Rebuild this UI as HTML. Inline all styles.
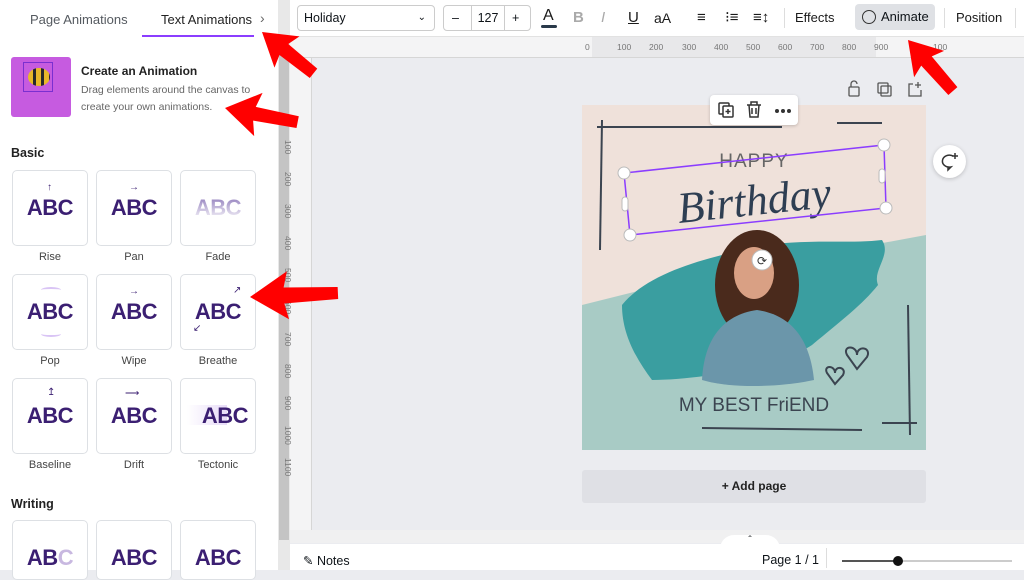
<!DOCTYPE html>
<html><head><meta charset="utf-8"><style>
*{margin:0;padding:0;box-sizing:border-box}
body{width:1024px;height:570px;overflow:hidden;background:#ebecf0;font-family:"Liberation Sans",sans-serif;position:relative;color:#0e1318}
.a{position:absolute}
.tab{font-size:13px;color:#555a60;top:12px}
.card{position:absolute;width:76px;height:76px;border:1px solid #dde0e4;border-radius:5px;background:#fff}
.abc{position:absolute;left:0;right:0;text-align:center;top:24px;font-weight:bold;font-size:22px;color:#3b1f72;letter-spacing:-0.5px}
.lbl{position:absolute;width:76px;text-align:center;font-size:11px;color:#444}
.h{position:absolute;left:11px;font-size:12.5px;font-weight:bold;color:#222}
.tb{position:absolute;top:0;height:36px;font-size:13px;line-height:36px;color:#1a1a1a}
.rn{position:absolute;font-size:8.5px;color:#777;top:42px}
.vn{position:absolute;left:293px;font-size:8.5px;color:#777;transform:rotate(90deg);transform-origin:left top}
</style></head><body>
<!-- left panel -->
<div class="a" style="left:0;top:0;width:278px;height:570px;background:#fff"></div>
<div class="a" style="left:278px;top:0;width:12px;height:570px;background:#e8e8e8"></div>
<div class="a" style="left:279px;top:40px;width:10px;height:500px;background:#c4c4c4"></div>
<div class="a tab" style="left:30px">Page Animations</div>
<div class="a tab" style="left:161px;color:#222">Text Animations</div>
<div class="a" style="left:260px;top:10px;font-size:14px;color:#666">›</div>
<div class="a" style="left:142px;top:35px;width:112px;height:2px;background:#8b3dff"></div>
<div class="a" style="left:11px;top:57px;width:60px;height:60px;background:#c65be0;border-radius:3px">
<div class="a" style="left:12px;top:5px;width:30px;height:30px;border:1px solid #7a2fd0"></div>
<div class="a" style="left:17px;top:11px;width:22px;height:18px;border-radius:50%;background:repeating-linear-gradient(90deg,#e8b82a 0 5px,#2a2a2a 5px 8px)"></div>
</div>
<div class="a" style="left:81px;top:64px;font-size:12px;font-weight:bold;color:#222">Create an Animation</div>
<div class="a" style="left:81px;top:82px;font-size:10.5px;color:#666;line-height:17px">Drag elements around the canvas to<br>create your own animations.</div>
<div class="h" style="top:146px">Basic</div>
<div class="card" style="left:12px;top:170px"><div class="a" style="left:34px;top:11px;font-size:10px;color:#3b1f72">↑</div><div class="abc">ABC</div></div>
<div class="card" style="left:96px;top:170px"><div class="a" style="left:32px;top:11px;font-size:10px;color:#3b1f72">→</div><div class="abc">ABC</div></div>
<div class="card" style="left:180px;top:170px"><div class="abc" style="background:linear-gradient(#8a75b8,#fff);-webkit-background-clip:text;color:transparent">ABC</div></div>
<div class="lbl" style="left:12px;top:251px">Rise</div><div class="lbl" style="left:96px;top:251px">Pan</div><div class="lbl" style="left:180px;top:251px">Fade</div>
<div class="card" style="left:12px;top:274px"><div class="a" style="left:28px;top:12px;width:20px;height:6px;border-top:2px solid #d9c4f5;border-radius:50%"></div><div class="abc">ABC</div><div class="a" style="left:28px;top:56px;width:20px;height:6px;border-bottom:2px solid #d9c4f5;border-radius:50%"></div></div>
<div class="card" style="left:96px;top:274px"><div class="a" style="left:32px;top:11px;font-size:10px;color:#3b1f72">→</div><div class="abc">ABC</div></div>
<div class="card" style="left:180px;top:274px"><div class="a" style="left:52px;top:10px;font-size:10px;color:#3b1f72">↗</div><div class="abc">ABC</div><div class="a" style="left:12px;top:48px;font-size:10px;color:#3b1f72">↙</div></div>
<div class="lbl" style="left:12px;top:355px">Pop</div><div class="lbl" style="left:96px;top:355px">Wipe</div><div class="lbl" style="left:180px;top:355px">Breathe</div>
<div class="card" style="left:12px;top:378px;overflow:hidden"><div class="a" style="left:34px;top:8px;font-size:10px;color:#3b1f72">↥</div><div class="abc" style="height:24px;overflow:hidden">ABC</div></div>
<div class="card" style="left:96px;top:378px"><div class="a" style="left:28px;top:9px;font-size:10px;color:#3b1f72">⟶</div><div class="abc">ABC</div></div>
<div class="card" style="left:180px;top:378px"><div class="a" style="left:6px;top:26px;width:40px;height:20px;background:linear-gradient(90deg,#fff,#e8dcf8)"></div><div class="abc" style="left:14px">ABC</div></div>
<div class="lbl" style="left:12px;top:459px">Baseline</div><div class="lbl" style="left:96px;top:459px">Drift</div><div class="lbl" style="left:180px;top:459px">Tectonic</div>
<div class="h" style="top:497px">Writing</div>
<div class="card" style="left:12px;top:520px;height:60px"><div class="abc">AB<span style="color:#c8b8e0">C</span></div></div>
<div class="card" style="left:96px;top:520px;height:60px"><div class="abc">ABC</div></div>
<div class="card" style="left:180px;top:520px;height:60px"><div class="abc">ABC</div></div>

<!-- toolbar -->
<div class="a" style="left:290px;top:0;width:734px;height:37px;background:#fff;border-bottom:1px solid #e2e2e2"></div>
<div class="a" style="left:297px;top:5px;width:138px;height:26px;border:1px solid #ccc;border-radius:4px;font-size:12.5px;line-height:24px;padding-left:6px">Holiday<span style="position:absolute;right:8px;font-size:10px">⌄</span></div>
<div class="a" style="left:443px;top:5px;width:88px;height:26px;border:1px solid #ccc;border-radius:4px;font-size:12.5px;line-height:24px">
<span class="a" style="left:8px">–</span><span class="a" style="left:27px;top:0;height:24px;border-left:1px solid #ccc;border-right:1px solid #ccc;width:34px;text-align:center">127</span><span class="a" style="left:68px">+</span></div>
<div class="tb" style="left:543px;font-size:16px;line-height:32px">A</div><div class="a" style="left:541px;top:25px;width:16px;height:3px;background:#2a3a4a;border-radius:2px"></div>
<div class="tb" style="left:573px;font-weight:bold;color:#aaa;font-size:15px">B</div>
<div class="tb" style="left:601px;font-style:italic;color:#aaa;font-size:15px">I</div>
<div class="tb" style="left:628px;text-decoration:underline;font-size:15px">U</div>
<div class="tb" style="left:654px;font-size:14px">aA</div>
<div class="tb" style="left:697px;font-size:15px">≡</div>
<div class="tb" style="left:725px;font-size:15px">⁝≡</div>
<div class="tb" style="left:753px;font-size:15px">≡↕</div>
<div class="a" style="left:784px;top:8px;width:1px;height:20px;background:#ddd"></div>
<div class="tb" style="left:795px">Effects</div>
<div class="a" style="left:855px;top:4px;width:80px;height:26px;background:#dfe1e5;border-radius:4px;font-size:13px;line-height:26px;padding-left:26px">Animate</div>
<div class="a" style="left:862px;top:10px;width:14px;height:14px;border:1.5px solid #333;border-radius:50%"></div>
<div class="a" style="left:944px;top:8px;width:1px;height:20px;background:#ddd"></div>
<div class="tb" style="left:956px">Position</div>
<div class="a" style="left:1015px;top:8px;width:1px;height:20px;background:#ddd"></div>

<!-- rulers -->
<div class="a" style="left:290px;top:37px;width:734px;height:21px;background:#f4f4f5;border-bottom:1px solid #d6d6d6"></div>
<div class="a" style="left:582px;top:37px;width:344px;height:20px;background:linear-gradient(90deg,#f4f4f5 0 10px,#e8e8ea 10px 294px,#f4f4f5 294px)"></div>
<div class="a" style="left:290px;top:58px;width:22px;height:485px;background:#f4f4f5;border-right:1px solid #d6d6d6"></div>
<div class="rn" style="left:585px">0</div><div class="rn" style="left:617px">100</div><div class="rn" style="left:649px">200</div><div class="rn" style="left:682px">300</div><div class="rn" style="left:714px">400</div><div class="rn" style="left:746px">500</div><div class="rn" style="left:778px">600</div><div class="rn" style="left:810px">700</div><div class="rn" style="left:842px">800</div><div class="rn" style="left:874px">900</div><div class="rn" style="left:933px">100</div>
<div class="vn" style="top:140px">100</div><div class="vn" style="top:172px">200</div><div class="vn" style="top:204px">300</div><div class="vn" style="top:236px">400</div><div class="vn" style="top:268px">500</div><div class="vn" style="top:300px">600</div><div class="vn" style="top:332px">700</div><div class="vn" style="top:364px">800</div><div class="vn" style="top:396px">900</div><div class="vn" style="top:426px">1000</div><div class="vn" style="top:458px">1100</div>

<!-- page icons -->
<svg class="a" style="left:845px;top:80px" width="80" height="18" fill="none" stroke="#555" stroke-width="1.3">
<rect x="4" y="7" width="10" height="9" rx="1"/><path d="M6 7 V4 a3 3 0 0 1 6 0"/>
<rect x="33" y="3" width="10" height="10" rx="1"/><rect x="36" y="6" width="10" height="10" rx="1"/>
<path d="M68 4 H64 V16 H76 V10 M73 2 V8 M70 5 H76"/>
</svg>

<!-- design card -->
<svg class="a" style="left:582px;top:105px" width="344" height="345" viewBox="0 0 344 345">
<rect width="344" height="345" fill="#efe1da"/>
<path d="M0 200 L100 175 L344 130 L344 345 L0 345Z" fill="#a8cbc5"/>
<path d="M40 200 C60 175 100 160 140 150 C200 130 260 140 300 135 C310 150 290 165 296 180 C280 200 260 215 230 240 C200 260 120 275 70 275 C55 255 40 230 40 200Z" fill="#3a9ea0"/>
<ellipse cx="175" cy="180" rx="42" ry="55" fill="#4a2a1c"/>
<ellipse cx="172" cy="168" rx="20" ry="26" fill="#d9a084"/>
<path d="M120 275 C122 235 140 210 175 205 C210 210 228 235 232 275 C200 282 150 284 120 275Z" fill="#6b96aa"/>
<g stroke="#3b4450" stroke-width="2" fill="none">
<path d="M20 15 L18 145"/><path d="M15 22 L200 22"/><path d="M255 18 L300 18"/><path d="M326 200 L328 330"/><path d="M120 323 L280 325"/><path d="M300 318 L335 318"/>
<path d="M265 250 c-5-10 10-10 10 0 c0-10 15-8 10 2 l-10 12z"/><path d="M245 268 c-4-8 8-8 8 0 c0-8 12-6 8 2 l-8 9z"/>
</g>
<text x="172" y="62" text-anchor="middle" font-family="Liberation Sans" font-size="19" fill="#666" letter-spacing="1">HAPPY</text>
<text x="172" y="110" text-anchor="middle" font-family="Liberation Serif" font-style="italic" font-size="44" fill="#2e3e52" transform="rotate(-6 172 95)">Birthday</text>
<text x="172" y="306" text-anchor="middle" font-family="Liberation Sans" font-size="19" fill="#3b4450">MY BEST FriEND</text>
<polygon points="42,68 302,40 304,103 48,130" fill="none" stroke="#8b3dff" stroke-width="1.5"/>
<g fill="#fff" stroke="#bbb"><circle cx="42" cy="68" r="6"/><circle cx="302" cy="40" r="6"/><circle cx="304" cy="103" r="6"/><circle cx="48" cy="130" r="6"/><rect x="40" y="92" width="6" height="14" rx="3"/><rect x="297" y="64" width="6" height="14" rx="3"/><circle cx="180" cy="155" r="10"/></g>
<text x="180" y="160" text-anchor="middle" font-size="12" fill="#333">⟳</text>
</svg>
<div class="a" style="left:710px;top:95px;width:88px;height:30px;background:#fff;border-radius:4px;box-shadow:0 1px 3px rgba(0,0,0,.2)"></div>
<svg class="a" style="left:710px;top:95px" width="88" height="30" fill="none" stroke="#333" stroke-width="1.5">
<rect x="9" y="8" width="10" height="11" rx="1"/><rect x="13" y="11" width="10" height="11" rx="1" fill="#fff"/><path d="M18 14 v5 M15.5 16.5 h5"/>
<path d="M37 10 h14 M41 10 V7 h6 v3 M39 10 l1 12 h8 l1-12 M42 13 v6 M46 13 v6"/>
<g fill="#333" stroke="none"><circle cx="67" cy="16" r="2"/><circle cx="73" cy="16" r="2"/><circle cx="79" cy="16" r="2"/></g>
</svg>
<div class="a" style="left:933px;top:145px;width:33px;height:33px;border-radius:50%;background:#fff;box-shadow:0 1px 4px rgba(0,0,0,.2)"></div>
<svg class="a" style="left:933px;top:145px" width="33" height="33" fill="none" stroke="#333" stroke-width="1.5"><path d="M20 11 a7 6 0 1 0 -2 11 l-3 3 l0-3"/><path d="M22 8 v6 M19 11 h6"/></svg>
<div class="a" style="left:582px;top:470px;width:344px;height:33px;background:#dfe0e5;border-radius:3px;text-align:center;line-height:33px;font-size:12px;font-weight:bold;color:#222">+ Add page</div>

<!-- bottom bar -->
<div class="a" style="left:290px;top:530px;width:734px;height:13px;background:#f0f0f1"></div>
<div class="a" style="left:720px;top:535px;width:60px;height:14px;background:#fff;border-radius:14px 14px 0 0;text-align:center;font-size:10px">ˆ</div>
<div class="a" style="left:290px;top:544px;width:734px;height:26px;background:#fff"></div>
<div class="a" style="left:303px;top:553px;font-size:12.5px">✎ Notes</div>
<div class="a" style="left:762px;top:553px;font-size:12.5px">Page 1 / 1</div>
<div class="a" style="left:826px;top:548px;width:1px;height:20px;background:#ddd"></div>
<div class="a" style="left:842px;top:560px;width:170px;height:2px;background:#ccc"></div>
<div class="a" style="left:842px;top:560px;width:56px;height:2px;background:#555"></div>
<div class="a" style="left:893px;top:556px;width:10px;height:10px;border-radius:50%;background:#111"></div>

<!-- red arrows -->
<svg class="a" style="left:0;top:0" width="1024" height="570">
<g fill="#f00">
<path transform="translate(262,32) rotate(38.7)" d="M0 0 L32 -20 L28 -7 L66 -6 L66 6 L28 7 L32 20Z"/>
<path transform="translate(225,108) rotate(11)" d="M0 0 L34 -22 L30 -7 L74 -6 L74 6 L30 7 L34 22Z"/>
<path transform="translate(250,297) rotate(-2.6)" d="M0 0 L38 -24 L34 -8 L88 -6 L88 6 L34 8 L38 24Z"/>
<path transform="translate(908,40) rotate(48.7)" d="M0 0 L32 -20 L28 -7 L68 -6 L68 6 L28 7 L32 20Z"/>
</g></svg>
</body></html>
